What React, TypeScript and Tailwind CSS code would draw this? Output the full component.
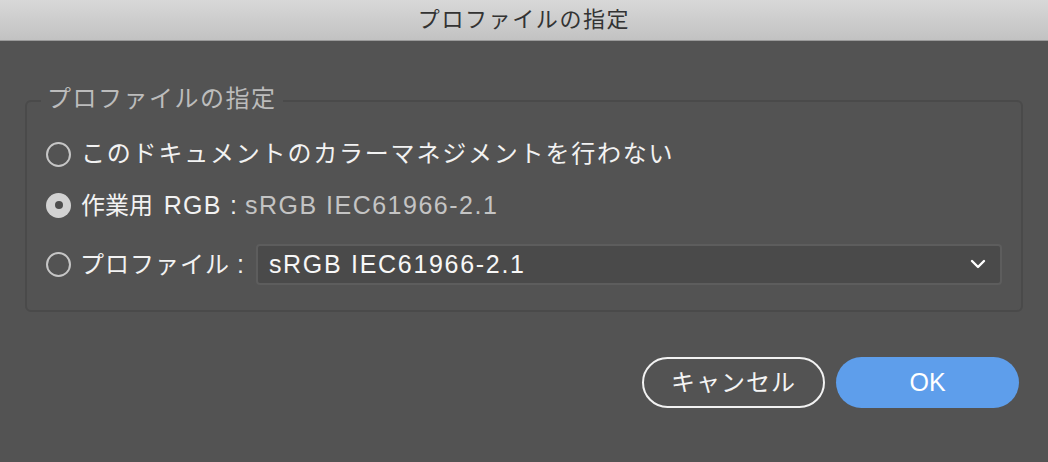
import React, { useState } from 'react';
import { ChevronDown } from 'lucide-react';

const font = { fontFamily: '"Liberation Sans", "Noto Sans CJK JP", sans-serif' };

type Choice = 'none' | 'working' | 'profile';

const Radio: React.FC<{ checked: boolean; onClick: () => void }> = ({ checked, onClick }) => (
  <button
    onClick={onClick}
    className={`flex h-[25px] w-[25px] shrink-0 items-center justify-center rounded-full ${
      checked ? 'bg-[#d2d2d2]' : 'border-2 border-[#c6c6c6]'
    }`}
  >
    {checked && <span className="h-[8px] w-[8px] rounded-full bg-[#4e4e4e]" />}
  </button>
);

const App: React.FC = () => {
  const [choice, setChoice] = useState<Choice>('working');

  return (
    <div className="flex h-[462px] w-[1048px] flex-col bg-[#535353]" style={font}>
      <div className="flex h-[41px] shrink-0 items-center justify-center border-b border-[#9a9a9a] bg-gradient-to-b from-[#d8d8d8] to-[#c2c2c2]">
        <span className="text-[22px] leading-none tracking-[1.6px] text-[#333333]">
          プロファイルの指定
        </span>
      </div>

      <div className="px-[25px] pt-[59px]">
        <div className="relative h-[212px] rounded-[6px] border-2 border-[#4a4a4a]">
          <span className="absolute -top-[18px] left-[14px] bg-[#535353] px-[6px] text-[24px] leading-[30px] tracking-[1.5px] text-[#bcbcbc]">
            プロファイルの指定
          </span>

          <div className="flex flex-col pl-[19px] pt-[37px]">
            <div className="flex h-[30px] items-center gap-[10px]">
              <Radio checked={choice === 'none'} onClick={() => setChoice('none')} />
              <span className="text-[24px] leading-none tracking-[1.8px] text-[#f2f2f2]">
                このドキュメントのカラーマネジメントを行わない
              </span>
            </div>

            <div className="mt-[21px] flex h-[30px] items-center gap-[10px]">
              <Radio checked={choice === 'working'} onClick={() => setChoice('working')} />
              <span className="text-[24px] leading-none text-[#f2f2f2]">
                作業用 <span className="ml-[4px] text-[25px] tracking-[1.3px]">RGB :</span>{' '}
                <span className="text-[25px] tracking-[1.5px] text-[#c4c4c4]">sRGB IEC61966-2.1</span>
              </span>
            </div>

            <div className="mt-[23px] flex h-[42px] items-center gap-[9px] pr-[19px]">
              <Radio checked={choice === 'profile'} onClick={() => setChoice('profile')} />
              <span className="text-[24px] leading-none tracking-[1px] text-[#f2f2f2]">
                プロファイル<span className="text-[25px] tracking-normal"> :</span>
              </span>
              <div className="ml-[3px] flex h-[41px] flex-1 items-center justify-between rounded-[4px] border-2 border-[#5d5d5d] bg-[#4a4a4a] pl-[11px] pr-[10px]">
                <span className="text-[25px] leading-none tracking-[1.7px] text-[#f7f7f7]">sRGB IEC61966-2.1</span>
                <ChevronDown className="h-[24px] w-[24px] text-white" strokeWidth={2.4} />
              </div>
            </div>
          </div>
        </div>
      </div>

      <div className="flex justify-end gap-[11px] pr-[29px] pt-[45px]">
        <button className="flex h-[51px] w-[183px] items-center justify-center rounded-full border-2 border-[#f2f2f2] text-[24px] tracking-[1px] text-[#f4f4f4]">
          キャンセル
        </button>
        <button className="flex h-[51px] w-[183px] items-center justify-center rounded-full bg-[#5e9eeb] text-[25px] text-white">
          OK
        </button>
      </div>
    </div>
  );
};

export default App;
